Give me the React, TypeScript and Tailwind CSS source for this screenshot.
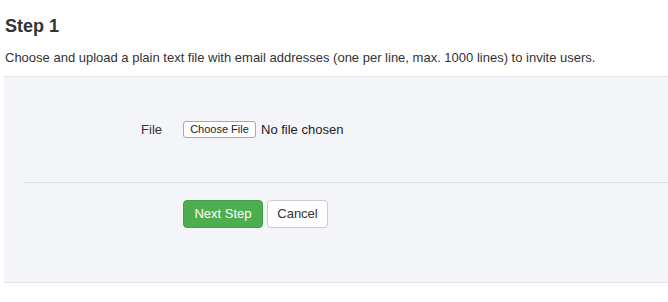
import React from "react";

// Step 1 of the bulk invite form
export default function App() {
  return (
    <div className="min-h-[302px] bg-white text-[#333] font-['Liberation_Sans',Arial,sans-serif]">
      <h3 className="pt-4 pl-[5px] text-[18px] leading-[20px] font-bold">Step 1</h3>
      <p className="mt-[13px] pl-[5px] text-[13px] leading-[18px]">
        Choose and upload a plain text file with email addresses (one per line, max. 1000 lines) to invite users.
      </p>

      <form className="mt-[9px] ml-[4px] border-y border-[#e4e5e8] bg-[#f4f5f8] pt-[44px] pb-[54px]">
        <div className="flex items-center h-[17px]">
          <label className="w-[158px] text-right text-[13px] leading-[17px]">File</label>
          <div className="ml-[21px] flex items-center gap-[5px]">
            <button
              type="button"
              className="h-[17px] w-[73px] border border-[#a9a9a9] rounded-[3px] bg-white text-[11px] leading-[15px] text-[#222]"
            >
              Choose File
            </button>
            <span className="text-[13px] leading-[17px] text-[#222]">No file chosen</span>
          </div>
        </div>

        <hr className="mt-[44px] ml-[19px] border-0 border-t border-[#dfe0e3]" />

        <div className="mt-[17px] flex gap-[4px] pl-[179px]">
          <button
            type="button"
            className="h-[28px] w-[80px] rounded-[4px] border border-[#449d48] bg-[#4cae4f] text-white text-[13px]"
          >
            Next Step
          </button>
          <button
            type="button"
            className="h-[28px] w-[61px] rounded-[4px] border border-[#cccccc] bg-white text-[#333] text-[13px]"
          >
            Cancel
          </button>
        </div>
      </form>
    </div>
  );
}
